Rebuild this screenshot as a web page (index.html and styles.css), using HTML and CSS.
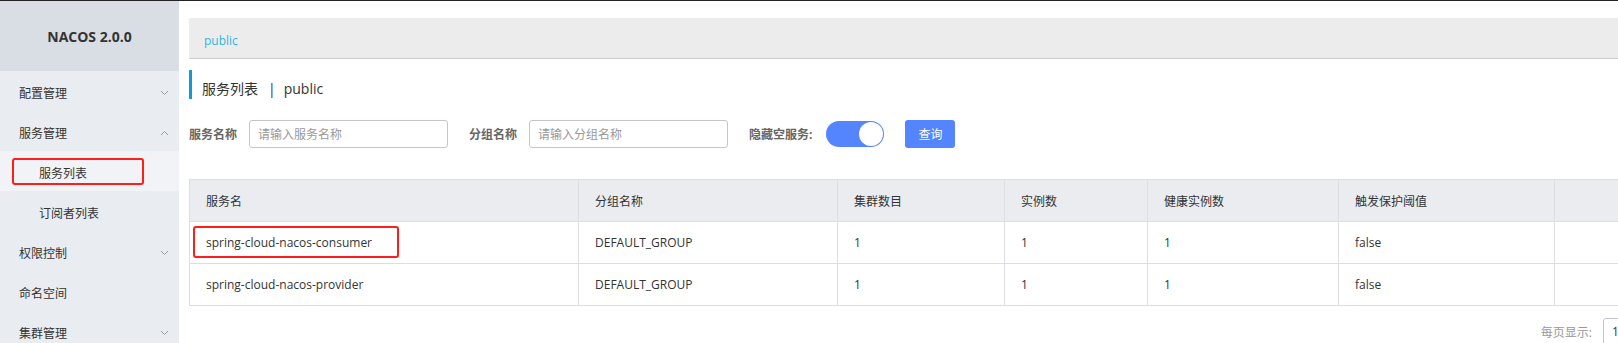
FILE: index.html
```html
<!DOCTYPE html>
<html lang="zh-CN">
<head>
    <meta charset="UTF-8">
    <meta name="viewport" content="width=device-width, initial-scale=1.0">
    <title>Nacos - 服务列表</title>
    <link rel="stylesheet" href="styles.css">
</head>
<body>
    <div class="topline"></div>
    <div class="layout">
        <aside class="sidebar">
            <div class="brand">NACOS 2.0.0</div>
            <ul class="menu">
                <li class="menu-item">
                    <span>配置管理</span>
                    <svg class="chevron" width="9" height="6" viewBox="0 0 9 6"><polyline points="1,1 4.5,4.5 8,1"/></svg>
                </li>
                <li class="menu-item">
                    <span>服务管理</span>
                    <svg class="chevron" width="9" height="6" viewBox="0 0 9 6"><polyline points="1,5 4.5,1.5 8,5"/></svg>
                </li>
                <li class="menu-item sub active">
                    <span>服务列表</span>
                    <div class="mark mark-menu"></div>
                </li>
                <li class="menu-item sub">
                    <span>订阅者列表</span>
                </li>
                <li class="menu-item">
                    <span>权限控制</span>
                    <svg class="chevron" width="9" height="6" viewBox="0 0 9 6"><polyline points="1,1 4.5,4.5 8,1"/></svg>
                </li>
                <li class="menu-item">
                    <span>命名空间</span>
                </li>
                <li class="menu-item">
                    <span>集群管理</span>
                    <svg class="chevron" width="9" height="6" viewBox="0 0 9 6"><polyline points="1,1 4.5,4.5 8,1"/></svg>
                </li>
            </ul>
        </aside>

        <main class="main">
            <div class="crumb"><span class="crumb-link">public</span></div>

            <h2 class="page-title">服务列表<span class="sep">|</span>public</h2>

            <div class="search">
                <div class="search-item">
                    <label class="search-label">服务名称</label>
                    <input class="search-input" type="text" placeholder="请输入服务名称">
                </div>
                <div class="search-item">
                    <label class="search-label">分组名称</label>
                    <input class="search-input" type="text" placeholder="请输入分组名称">
                </div>
                <div class="search-item">
                    <label class="search-label switch-label">隐藏空服务:</label>
                    <div class="switch"><div class="switch-knob"></div></div>
                </div>
                <button class="btn-primary" type="button">查询</button>
            </div>

            <table class="service-table">
                <colgroup>
                    <col style="width: 389px">
                    <col style="width: 259px">
                    <col style="width: 167px">
                    <col style="width: 143px">
                    <col style="width: 191px">
                    <col style="width: 216px">
                    <col style="width: 150px">
                </colgroup>
                <thead>
                    <tr>
                        <th>服务名</th>
                        <th>分组名称</th>
                        <th>集群数目</th>
                        <th>实例数</th>
                        <th>健康实例数</th>
                        <th>触发保护阈值</th>
                        <th></th>
                    </tr>
                </thead>
                <tbody>
                    <tr>
                        <td class="name-cell">spring-cloud-nacos-consumer<div class="mark mark-cell"></div></td>
                        <td>DEFAULT_GROUP</td>
                        <td>1</td>
                        <td>1</td>
                        <td>1</td>
                        <td>false</td>
                        <td></td>
                    </tr>
                    <tr>
                        <td>spring-cloud-nacos-provider</td>
                        <td>DEFAULT_GROUP</td>
                        <td>1</td>
                        <td>1</td>
                        <td>1</td>
                        <td>false</td>
                        <td></td>
                    </tr>
                </tbody>
            </table>

            <div class="pager">
                <span class="pager-label">每页显示:</span>
                <div class="pager-select">10</div>
            </div>
        </main>
    </div>
</body>
</html>
```

FILE: styles.css
```css
body {
    margin: 0;
    width: 1618px;
    height: 343px;
    overflow: hidden;
    font-family: "Open Sans", "Noto Sans CJK SC", sans-serif;
    font-size: 12px;
    color: #333;
    background: #fff;
}
.topline {
    height: 1px;
    background: #222;
}
.layout {
    display: flex;
    height: 342px;
}

/* sidebar */
.sidebar {
    flex: none;
    width: 179px;
    background: #e9ecf0;
}
.brand {
    height: 70px;
    display: flex;
    align-items: center;
    justify-content: center;
    background: #d9dde4;
    font-weight: bold;
    font-size: 14px;
    color: #333;
}
.menu {
    list-style: none;
    margin: 0;
    padding: 0;
}
.menu-item {
    position: relative;
    height: 40px;
    display: flex;
    align-items: center;
    justify-content: space-between;
    padding: 3px 10px 0 19px;
    box-sizing: border-box;
    color: #333;
}
.menu-item.sub {
    padding-left: 39px;
}
.menu-item.active {
    background: #f2f3f6;
}
.chevron {
    fill: none;
    stroke: #999;
    stroke-width: 1;
}

/* red annotation boxes */
.mark {
    position: absolute;
    border: 2px solid #ff1f1a;
    border-radius: 3px;
    box-sizing: border-box;
}
.mark-menu {
    left: 12px;
    top: 7px;
    width: 132px;
    height: 27px;
}
.mark-cell {
    left: 3px;
    top: 4px;
    width: 206px;
    height: 32px;
}

/* main */
.main {
    flex: 1;
    min-width: 0;
    overflow: hidden;
    padding: 17px 0 0 10px;
}
.crumb {
    height: 41px;
    box-sizing: border-box;
    padding: 5px 0 0 15px;
    display: flex;
    align-items: center;
    background: #ececec;
    border-bottom: 1px solid #ccc;
}
.crumb-link {
    color: #2db8e0;
}
.page-title {
    margin: 11px 0 0;
    height: 29px;
    box-sizing: border-box;
    padding: 10px 0 0 10px;
    line-height: 18px;
    border-left: 3px solid #0f9bd7;
    font-size: 14px;
    font-weight: normal;
    color: #333;
}
.sep {
    margin: 0 8px 0 10px;
}

/* search row */
.search {
    display: flex;
    align-items: center;
    margin-top: 21px;
    height: 28px;
}
.search-item {
    display: flex;
    align-items: center;
    margin-right: 21px;
}
.search-label {
    font-weight: bold;
    color: #666;
    margin-right: 12px;
}
.switch-label {
    margin-right: 14px;
}
.search-input {
    width: 199px;
    height: 28px;
    box-sizing: border-box;
    padding: 0 8px;
    border: 1px solid #c4c6cf;
    border-radius: 3px;
    font-family: inherit;
    font-size: 12px;
    color: #333;
    outline: none;
}
.search-input::placeholder {
    color: #999;
}
.switch {
    position: relative;
    width: 58px;
    height: 26px;
    border-radius: 13px;
    background: #5584ff;
}
.switch-knob {
    position: absolute;
    right: 1px;
    top: 1px;
    width: 24px;
    height: 24px;
    border-radius: 50%;
    background: #fff;
}
.btn-primary {
    width: 50px;
    height: 28px;
    padding: 0;
    border: none;
    border-radius: 3px;
    background: #5584ff;
    color: #fff;
    font-family: inherit;
    font-size: 12px;
}

/* table */
.service-table {
    margin-top: 31px;
    width: 1515px;
    table-layout: fixed;
    border-collapse: collapse;
}
.service-table th,
.service-table td {
    height: 41px;
    padding: 0 16px;
    border: 1px solid #dcdee3;
    text-align: left;
    font-weight: normal;
    color: #333;
    white-space: nowrap;
}
.service-table th {
    background: #ebecf0;
}
.name-cell {
    position: relative;
}

/* pager */
.pager {
    width: 1515px;
    margin-top: 12px;
    display: flex;
    align-items: center;
    justify-content: flex-end;
}
.pager-label {
    color: #999;
    margin-right: 11px;
}
.pager-select {
    width: 101px;
    height: 28px;
    box-sizing: border-box;
    padding-left: 8px;
    line-height: 26px;
    border: 1px solid #c4c6cf;
    border-radius: 3px;
}
```
